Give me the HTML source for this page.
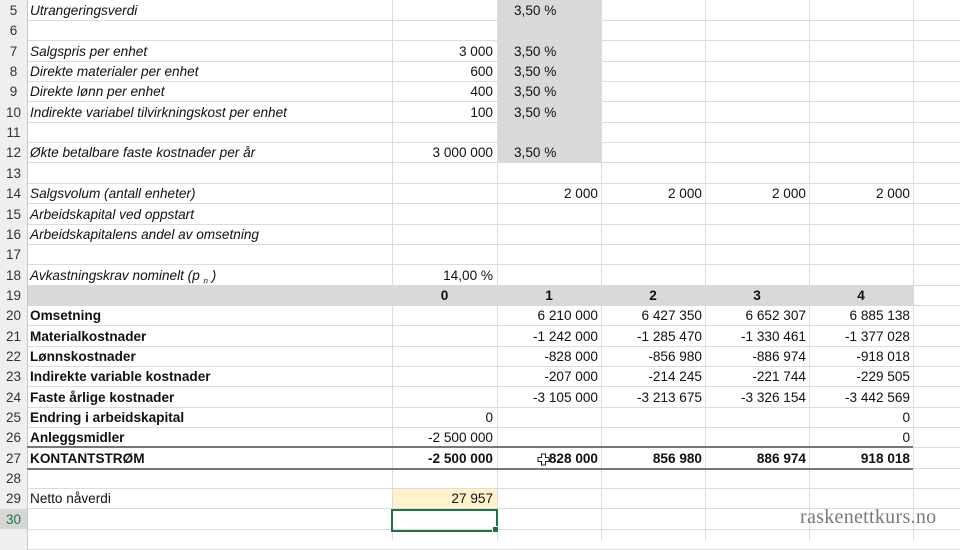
<!DOCTYPE html>
<html><head><meta charset="utf-8"><style>
body{margin:0;width:960px;height:540px;overflow:hidden;background:#fff;font-family:"Liberation Sans",sans-serif;font-size:13.6px;color:#111;position:relative}
.v{position:absolute;top:0;height:540px;width:1px;background:#dcdcdc}
.r{position:absolute;left:0;width:960px;height:20px;border-bottom:1px solid #dcdcdc}
.n{position:absolute;left:0;width:27px;height:21px;background:#efefef;text-align:center;line-height:21px;font-size:13.5px;color:#333;border-right:1px solid #c8c8c8}
.c{position:absolute;top:0;height:20px;line-height:22px;white-space:nowrap}
.t{left:30px;font-style:italic}
.b{left:30px;font-weight:bold}
.C{left:392px;width:101px;text-align:right}
.D{left:497px;width:101px;text-align:right}
.E{left:601px;width:101px;text-align:right}
.F{left:705px;width:101px;text-align:right}
.G{left:809px;width:101px;text-align:right}
.p{left:514px;text-align:left}
.gr{position:absolute;background:#d9d9d9}
.bold .C,.bold .D,.bold .E,.bold .F,.bold .G{font-weight:bold}
</style></head><body>
<div class="gr" style="left:497px;top:0;width:104px;height:162px"></div>
<div class="gr" style="left:27px;top:285px;width:886px;height:20px"></div>
<div style="position:absolute;left:392px;top:488px;width:105px;height:20px;background:#fff2cc"></div>
<div class="v" style="left:392px"></div><div class="v" style="left:497px"></div><div class="v" style="left:601px"></div><div class="v" style="left:705px"></div><div class="v" style="left:809px"></div><div class="v" style="left:913px"></div>

<div class="r" style="top:0"><div class="n">5</div><div class="c t">Utrangeringsverdi</div><div class="c p">3,50 %</div></div>
<div class="r" style="top:20px"><div class="n">6</div></div>
<div class="r" style="top:41px"><div class="n">7</div><div class="c t">Salgspris per enhet</div><div class="c C">3 000</div><div class="c p">3,50 %</div></div>
<div class="r" style="top:61px"><div class="n">8</div><div class="c t">Direkte materialer per enhet</div><div class="c C">600</div><div class="c p">3,50 %</div></div>
<div class="r" style="top:81px"><div class="n">9</div><div class="c t">Direkte lønn per enhet</div><div class="c C">400</div><div class="c p">3,50 %</div></div>
<div class="r" style="top:102px"><div class="n">10</div><div class="c t">Indirekte variabel tilvirkningskost per enhet</div><div class="c C">100</div><div class="c p">3,50 %</div></div>
<div class="r" style="top:122px"><div class="n">11</div></div>
<div class="r" style="top:142px"><div class="n">12</div><div class="c t">Økte betalbare faste kostnader per år</div><div class="c C">3 000 000</div><div class="c p">3,50 %</div></div>
<div class="r" style="top:163px"><div class="n">13</div></div>
<div class="r" style="top:183px"><div class="n">14</div><div class="c t">Salgsvolum (antall enheter)</div><div class="c D">2 000</div><div class="c E">2 000</div><div class="c F">2 000</div><div class="c G">2 000</div></div>
<div class="r" style="top:204px"><div class="n">15</div><div class="c t">Arbeidskapital ved oppstart</div></div>
<div class="r" style="top:224px"><div class="n">16</div><div class="c t">Arbeidskapitalens andel av omsetning</div></div>
<div class="r" style="top:244px"><div class="n">17</div></div>
<div class="r" style="top:265px"><div class="n">18</div><div class="c t">Avkastningskrav nominelt (p <sub style="font-size:8px">n</sub> )</div><div class="c C">14,00 %</div></div>
<div class="r" style="top:285px;border-bottom-color:#d9d9d9"><div class="n">19</div><div class="c" style="left:392px;width:105px;text-align:center;font-weight:bold">0</div><div class="c" style="left:497px;width:104px;text-align:center;font-weight:bold">1</div><div class="c" style="left:601px;width:104px;text-align:center;font-weight:bold">2</div><div class="c" style="left:705px;width:104px;text-align:center;font-weight:bold">3</div><div class="c" style="left:809px;width:104px;text-align:center;font-weight:bold">4</div></div>
<div class="r" style="top:305px"><div class="n">20</div><div class="c b">Omsetning</div><div class="c D">6 210 000</div><div class="c E">6 427 350</div><div class="c F">6 652 307</div><div class="c G">6 885 138</div></div>
<div class="r" style="top:326px"><div class="n">21</div><div class="c b">Materialkostnader</div><div class="c D">-1 242 000</div><div class="c E">-1 285 470</div><div class="c F">-1 330 461</div><div class="c G">-1 377 028</div></div>
<div class="r" style="top:346px"><div class="n">22</div><div class="c b">Lønnskostnader</div><div class="c D">-828 000</div><div class="c E">-856 980</div><div class="c F">-886 974</div><div class="c G">-918 018</div></div>
<div class="r" style="top:366px"><div class="n">23</div><div class="c b">Indirekte variable kostnader</div><div class="c D">-207 000</div><div class="c E">-214 245</div><div class="c F">-221 744</div><div class="c G">-229 505</div></div>
<div class="r" style="top:387px"><div class="n">24</div><div class="c b">Faste årlige kostnader</div><div class="c D">-3 105 000</div><div class="c E">-3 213 675</div><div class="c F">-3 326 154</div><div class="c G">-3 442 569</div></div>
<div class="r" style="top:407px"><div class="n">25</div><div class="c b">Endring i arbeidskapital</div><div class="c C">0</div><div class="c G">0</div></div>
<div class="r" style="top:427px"><div class="n">26</div><div class="c b">Anleggsmidler</div><div class="c C">-2 500 000</div><div class="c G">0</div></div>
<div class="r bold" style="top:448px"><div class="n">27</div><div class="c b">KONTANTSTRØM</div><div class="c C">-2 500 000</div><div class="c D">828 000</div><div class="c E">856 980</div><div class="c F">886 974</div><div class="c G">918 018</div></div>
<div class="r" style="top:468px"><div class="n">28</div></div>
<div class="r" style="top:488px"><div class="n">29</div><div class="c" style="left:30px">Netto nåverdi</div><div class="c C">27 957</div></div>
<div class="r" style="top:509px"><div class="n" style="background:#d6d6d6;color:#217346">30</div></div>
<div class="r" style="top:529px"><div class="n"></div></div>
<div style="position:absolute;left:27px;top:446px;width:886px;height:2px;background:#777"></div>
<div style="position:absolute;left:27px;top:468px;width:886px;height:2px;background:#777"></div>
<div style="position:absolute;left:391px;top:509px;width:103px;height:19px;border:2px solid #217346"></div>
<div style="position:absolute;left:492px;top:526px;width:5px;height:5px;background:#217346;border:1px solid #fff"></div>
<svg style="position:absolute;left:537px;top:453px" width="13" height="13" viewBox="0 0 13 13"><path d="M4.5 1h4v3.5H12v4H8.5V12h-4V8.5H1v-4h3.5z" fill="#fff" stroke="#222" stroke-width="1"/></svg>
<div style="position:absolute;left:800px;top:506px;font-family:'Liberation Serif',serif;font-size:20px;color:#7a7a7a;letter-spacing:0.3px">raskenettkurs.no</div>
</body></html>
